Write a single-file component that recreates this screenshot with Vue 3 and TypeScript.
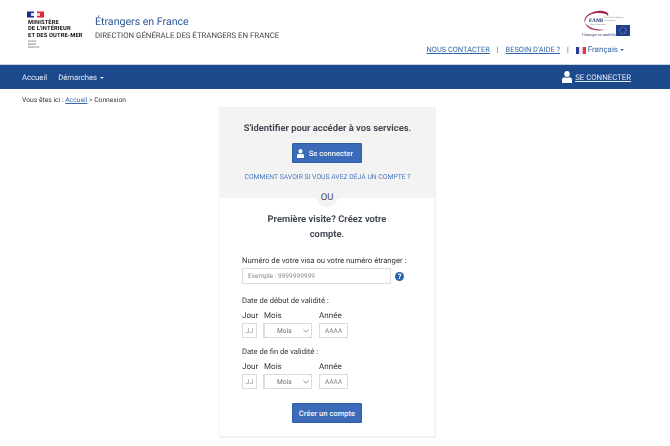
<template>
  <div class="page">
    <header class="top">
      <div class="marianne">
        <svg class="marianne__flag" width="17" height="7" viewBox="0 0 17 7" aria-hidden="true">
          <rect width="7" height="6" y="0.5" fill="#1f2a8c" />
          <rect x="4" y="2" width="3" height="3" fill="#dfe3f2" />
          <rect x="10" y="0.5" width="7" height="6" fill="#e1262d" />
          <rect x="10" y="2" width="3" height="3" fill="#f6d0d0" />
        </svg>
        <div class="marianne__name">MINISTÈRE<br />DE L'INTÉRIEUR<br />ET DES OUTRE-MER</div>
        <div class="marianne__motto">Liberté<br />Égalité<br />Fraternité</div>
      </div>
      <div class="brand">
        <div class="brand__title">Étrangers en France</div>
        <div class="brand__sub">DIRECTION GÉNÉRALE DES ÉTRANGERS EN FRANCE</div>
      </div>
      <div class="top__right">
        <div class="fami">
          <svg width="48" height="27" viewBox="0 0 48 27" aria-hidden="true">
            <path d="M3 13C0 5 13 0 21 1 26 2 27 4 26 6 24 3 18 2.500 12 3.500 6 4.500 3 8 3 13Z" fill="#a3234f" />
            <path d="M3 13C5 19 13 22 24 19.500 15 20.500 7 18 3 13Z" fill="#a3234f" />
            <text x="7" y="11.500" class="fami__word">FAMI</text>
            <text x="22" y="8" class="fami__tiny">Fonds Asile, Migration</text>
            <text x="22" y="10.500" class="fami__tiny">et Intégration</text>
            <text x="8" y="15" class="fami__tiny">Union européenne</text>
            <text x="0" y="25.500" class="fami__line">l'Europe se mobilise</text>
            <rect x="34" y="15" width="14" height="11" fill="#1c3f94" />
            <circle cx="41" cy="20.500" r="3.300" fill="none" stroke="#e6c93a" stroke-width="0.7" stroke-dasharray="0.8 0.8" />
          </svg>
        </div>
        <nav class="tools">
          <a class="tools__link">NOUS CONTACTER</a>
          <span class="tools__sep">|</span>
          <a class="tools__link">BESOIN D'AIDE ?</a>
          <span class="tools__sep">|</span>
          <span class="lang">
            <svg width="10" height="7" viewBox="0 0 10 7" aria-hidden="true">
              <rect width="3.300" height="7" fill="#2a3a9c" />
              <rect x="3.300" width="3.400" height="7" fill="#f2f2f6" />
              <rect x="6.700" width="3.300" height="7" fill="#e2373f" />
            </svg>
            Français
            <i class="caret caret--small"></i>
          </span>
        </nav>
      </div>
    </header>

    <div class="navbar">
      <a class="navbar__item">Accueil</a>
      <a class="navbar__item">Démarches <i class="caret"></i></a>
      <a class="navbar__login">
        <svg width="10" height="12" viewBox="0 0 11 12" preserveAspectRatio="none" aria-hidden="true">
          <circle cx="5.500" cy="3" r="3" fill="#fff" />
          <path d="M0 12V8.800C0 7.300 1.200 6.400 2.600 6.200 3.500 6.800 7.500 6.800 8.400 6.200 9.800 6.400 11 7.300 11 8.800V12Z" fill="#fff" />
        </svg>
        <span>SE CONNECTER</span>
      </a>
    </div>

    <div class="crumb">Vous êtes ici : <a>Accueil</a> &gt; Connexion</div>

    <main class="card">
      <section class="login">
        <h2>S'identifier pour accéder à vos services.</h2>
        <button class="btn btn--login" type="button">
          <svg width="7" height="9" viewBox="0 0 11 12" preserveAspectRatio="none" aria-hidden="true">
            <circle cx="5.500" cy="3" r="3" fill="#fff" />
            <path d="M0 12V8.800C0 7.300 1.200 6.400 2.600 6.200 3.500 6.800 7.500 6.800 8.400 6.200 9.800 6.400 11 7.300 11 8.800V12Z" fill="#fff" />
          </svg>
          Se connecter
        </button>
        <a class="login__how">COMMENT SAVOIR SI VOUS AVEZ DÉJÀ UN COMPTE ?</a>
      </section>
      <section class="signup">
        <div class="or">OU</div>
        <h2>Première visite? Créez votre compte.</h2>
        <label class="field-label">Numéro de votre visa ou votre numéro étranger :</label>
        <div class="visa">
          <input class="input input--visa" type="text" placeholder="Exemple : 9999999999" />
          <span class="help">?</span>
        </div>
        <div v-for="group in dateGroups" :key="group" class="dates">
          <div class="dates__title">{{ group }}</div>
          <div class="dates__row">
            <div class="dates__col">
              <span>Jour</span>
              <input class="input input--day" type="text" placeholder="JJ" />
            </div>
            <div class="dates__col">
              <span>Mois</span>
              <div class="month">
                Mois
                <svg width="6" height="4" viewBox="0 0 7 4" aria-hidden="true">
                  <path d="M0.500 0.500 3.500 3.200 6.500 0.500" fill="none" stroke="#666" stroke-width="0.8" />
                </svg>
              </div>
            </div>
            <div class="dates__col">
              <span>Année</span>
              <input class="input input--year" type="text" placeholder="AAAA" />
            </div>
          </div>
        </div>
        <button class="btn btn--create" type="button">Créer un compte</button>
      </section>
    </main>
  </div>
</template>

<script setup lang="ts">
const dateGroups: string[] = ['Date de début de validité :', 'Date de fin de validité :'];
</script>

<style>
html,
body {
  margin: 0;
  background: #fff;
  overflow: hidden;
}
</style>

<style scoped>
/* the reference is a downscaled capture, hence the slight blur */
.page {
  width: 670px;
  height: 446px;
  overflow: hidden;
  font-family: Roboto, "Liberation Sans", sans-serif;
  color: #333;
  text-rendering: geometricPrecision;
  filter: blur(0.3px);
}

.top {
  display: flex;
  height: 65px;
  box-sizing: border-box;
  padding: 10px 39px 0 27px;
  border-bottom: 1px solid #c9d2de;
}

.marianne {
  width: 68px;
  padding-top: 1px;
}

.marianne__flag {
  display: block;
}

.marianne__name {
  margin-top: 2px;
  margin-left: 1px;
  color: #111;
  font-size: 5.800px;
  font-weight: 700;
  line-height: 6.300px;
  letter-spacing: 0.1px;
  white-space: nowrap;
}

.marianne__motto {
  margin-top: 1.500px;
  margin-left: 1px;
  color: #555;
  font-size: 2.800px;
  font-style: italic;
  line-height: 3px;
}

.brand {
  padding-top: 3.500px;
}

.brand__title {
  color: #2a5598;
  font-size: 10.600px;
  line-height: 15px;
}

.brand__sub {
  margin-top: 2px;
  color: #444;
  font-size: 7.800px;
  line-height: 10px;
  white-space: nowrap;
}

.top__right {
  display: flex;
  flex-direction: column;
  align-items: flex-end;
  margin-left: auto;
}

.fami {
  height: 27px;
  margin-right: 1px;
}

.fami svg {
  display: block;
}

.fami__word {
  fill: #1f2f70;
  font-family: "Liberation Serif", serif;
  font-size: 5.500px;
  font-weight: 700;
}

.fami__tiny {
  fill: #7a7a85;
  font-size: 2px;
}

.fami__line {
  fill: #23305f;
  font-family: "Liberation Serif", serif;
  font-size: 4.400px;
  font-style: italic;
}

.tools {
  display: flex;
  align-items: center;
  gap: 7px;
  margin-top: 8px;
  margin-right: 7px;
  font-size: 7.400px;
  line-height: 10px;
}

.tools__link {
  color: #3567a8;
  text-decoration: underline;
}

.tools__sep {
  color: #555;
}

.lang {
  display: flex;
  align-items: center;
  gap: 2px;
  color: #3567a8;
  font-size: 8px;
}

.navbar {
  display: flex;
  align-items: center;
  height: 24px;
  padding: 0 39px 0 22px;
  background: #1c488c;
  color: #e6ecf5;
  font-size: 7.700px;
}

.navbar__item {
  margin-right: 11px;
}

.navbar__login {
  display: flex;
  align-items: center;
  gap: 3px;
  margin-left: auto;
  font-size: 7.800px;
  text-decoration: underline;
}

.caret {
  display: inline-block;
  margin-left: 1px;
  vertical-align: 1px;
  border-top: 2.500px solid currentColor;
  border-right: 2px solid transparent;
  border-left: 2px solid transparent;
}

.caret--small {
  margin-left: 0;
  border-top-width: 2px;
}

.crumb {
  height: 18px;
  padding: 7px 0 0 22px;
  box-sizing: border-box;
  color: #333;
  font-size: 6.750px;
  line-height: 9px;
}

.crumb a {
  color: #3567a8;
  text-decoration: underline;
}

.card {
  width: 217px;
  height: 331px;
  box-sizing: border-box;
  margin-left: 219px;
  border-right: 2px solid #f3f3f3;
  border-bottom: 2px solid #f3f3f3;
  border-left: 1px solid #f3f3f3;
}

.login {
  display: flex;
  flex-direction: column;
  align-items: center;
  height: 91px;
  margin-left: -1px;
  margin-right: -2px;
  padding-top: 15px;
  box-sizing: border-box;
  background: #f3f3f3;
}

h2 {
  margin: 0;
  color: #444b55;
  font-size: 9.400px;
  font-weight: 700;
  line-height: 14px;
  text-align: center;
}

.btn {
  display: flex;
  align-items: center;
  justify-content: center;
  gap: 5px;
  width: 70px;
  height: 20px;
  padding: 0;
  border: 1px solid #2f5ea8;
  border-radius: 1px;
  background: #3b6bb8;
  color: #f0f4fa;
  font-family: inherit;
  font-size: 7.600px;
  font-weight: 500;
  text-rendering: geometricPrecision;
}

.btn--login {
  margin-top: 7px;
  margin-left: -1px;
  padding-right: 4px;
}

.login__how {
  margin-top: 10px;
  color: #4a78bf;
  font-size: 6.800px;
  line-height: 8px;
}

.signup {
  position: relative;
  display: flex;
  flex-direction: column;
  height: 238px;
  box-sizing: border-box;
  padding: 14px 22px 0;
}

.signup h2 {
  width: 150px;
  margin: 0 auto;
  line-height: 15px;
}

.or {
  position: absolute;
  top: -9px;
  left: 50%;
  width: 22px;
  height: 18px;
  margin-left: -11px;
  border-radius: 0 0 11px 11px;
  background: #f3f3f3;
  color: #444;
  font-size: 9.500px;
  line-height: 18px;
  text-align: center;
}

.field-label {
  margin-top: 14px;
  color: #333;
  font-size: 7.700px;
  line-height: 10px;
  white-space: nowrap;
}

.visa {
  display: flex;
  align-items: center;
  gap: 4px;
  margin-top: 2px;
}

.input {
  box-sizing: border-box;
  height: 15px;
  padding: 0;
  border: 1px solid #dcdcdc;
  background: #fff;
  font-family: inherit;
  font-size: 6.600px;
  outline: 0;
  text-rendering: geometricPrecision;
}

.input::placeholder {
  color: #8a8a8a;
  opacity: 1;
}

.input--visa {
  width: 149px;
  height: 16px;
  padding-left: 5px;
}

.help {
  width: 9px;
  height: 9px;
  border-radius: 50%;
  background: #2b62ad;
  color: #fff;
  font-size: 7.500px;
  font-weight: 700;
  line-height: 9px;
  text-align: center;
}

.dates {
  margin-top: 8px;
}

.visa + .dates {
  margin-top: 11px;
}

.dates__title {
  margin-top: 1px;
  color: #333;
  font-size: 7.600px;
  line-height: 10px;
}

.dates__row {
  display: flex;
  gap: 6px;
  margin-top: 5px;
}

.dates__col {
  display: flex;
  flex-direction: column;
  gap: 2px;
  font-size: 8px;
  line-height: 10px;
}

.input--day {
  width: 15px;
  text-align: center;
}

.input--year {
  width: 29px;
  text-align: center;
}

.month {
  display: flex;
  align-items: center;
  justify-content: space-between;
  box-sizing: border-box;
  width: 49px;
  height: 15px;
  margin-right: 1px;
  margin-left: -1px;
  padding: 0 2px 0 12px;
  border: 1px solid #dcdcdc;
  border-left-width: 2px;
  color: #666;
  font-size: 6.600px;
}

.btn--create {
  margin: 14px auto 0;
}
</style>
